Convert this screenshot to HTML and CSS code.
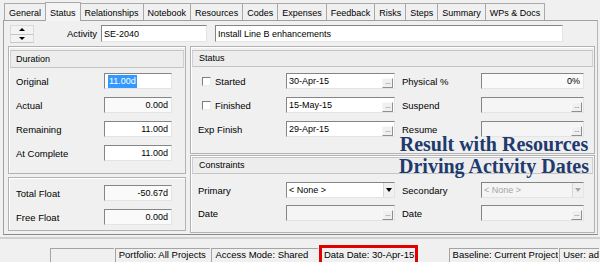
FILE: index.html
```html
<!DOCTYPE html>
<html>
<head>
<meta charset="utf-8">
<link rel="stylesheet" href="styles.css">
</head>
<body>
<div class="tabs">
  <div class="tab">General</div>
  <div class="tab sel">Status</div>
  <div class="tab">Relationships</div>
  <div class="tab">Notebook</div>
  <div class="tab">Resources</div>
  <div class="tab">Codes</div>
  <div class="tab">Expenses</div>
  <div class="tab">Feedback</div>
  <div class="tab">Risks</div>
  <div class="tab">Steps</div>
  <div class="tab">Summary</div>
  <div class="tab">WPs &amp; Docs</div>
</div>
<div class="page">
  <div class="actrow">
    <div class="spin">
      <div class="sbtn"><i class="up"></i></div>
      <div class="sbtn"><i class="dn"></i></div>
    </div>
    <span class="actlbl">Activity</span>
    <div class="fld f-id">SE-2040</div>
    <div class="fld f-desc">Install Line B enhancements</div>
  </div>
  <div class="main">
    <div class="lcol">
      <div class="grp g-dur">
        <div class="ghead">Duration</div>
        <div class="rows">
          <div class="row"><span class="lbl l-dur">Original</span><div class="fld f-dur"><span class="hl">11.00d</span></div></div>
          <div class="row"><span class="lbl l-dur">Actual</span><div class="fld f-dur ro num">0.00d</div></div>
          <div class="row"><span class="lbl l-dur">Remaining</span><div class="fld f-dur num">11.00d</div></div>
          <div class="row"><span class="lbl l-dur">At Complete</span><div class="fld f-dur num">11.00d</div></div>
        </div>
      </div>
      <div class="grp g-flt">
        <div class="rows">
          <div class="row"><span class="lbl l-dur">Total Float</span><div class="fld f-dur ro num">-50.67d</div></div>
          <div class="row"><span class="lbl l-dur">Free Float</span><div class="fld f-dur ro num">0.00d</div></div>
        </div>
      </div>
    </div>
    <div class="rcol">
      <div class="grp g-st">
        <div class="ghead">Status</div>
        <div class="rows">
          <div class="row">
            <span class="lbl l-a"><span class="chk"></span>Started</span>
            <div class="fld f-a"><span class="txt">30-Apr-15</span><span class="dots">...</span></div>
            <span class="lbl l-b">Physical %</span>
            <div class="fld f-b ro num">0%</div>
          </div>
          <div class="row">
            <span class="lbl l-a"><span class="chk"></span>Finished</span>
            <div class="fld f-a"><span class="txt">15-May-15</span><span class="dots">...</span></div>
            <span class="lbl l-b">Suspend</span>
            <div class="fld f-b dis"><span class="dots">...</span></div>
          </div>
          <div class="row">
            <span class="lbl l-a">Exp Finish</span>
            <div class="fld f-a"><span class="txt">29-Apr-15</span><span class="dots">...</span></div>
            <span class="lbl l-b">Resume</span>
            <div class="fld f-b dis"><span class="dots">...</span></div>
          </div>
        </div>
      </div>
      <div class="grp g-con">
        <div class="ghead">Constraints</div>
        <div class="rows">
          <div class="row">
            <span class="lbl l-a">Primary</span>
            <div class="fld f-a"><span class="txt">&lt; None &gt;</span><span class="arrow"><i></i></span></div>
            <span class="lbl l-b">Secondary</span>
            <div class="fld f-b dis grey"><span class="txt">&lt; None &gt;</span><span class="arrow off"><i></i></span></div>
          </div>
          <div class="row">
            <span class="lbl l-a">Date</span>
            <div class="fld f-a dis"><span class="dots">...</span></div>
            <span class="lbl l-b">Date</span>
            <div class="fld f-b dis"><span class="dots">...</span></div>
          </div>
        </div>
      </div>
    </div>
  </div>
</div>
<div class="sbar">
  <div class="cell c-empty"></div>
  <div class="cell c-port">Portfolio: All Projects</div>
  <div class="cell c-acc">Access Mode: Shared</div>
  <div class="cell c-date">Data Date: 30-Apr-15</div>
  <div class="cell c-base">Baseline: Current Project</div>
  <div class="cell c-user">User: admin</div>
</div>
<div class="overlay">Result with Resources<br>Driving Activity Dates</div>
</body>
</html>
```

FILE: styles.css
```css
html, body {
  margin: 0;
  padding: 0;
}
body {
  width: 600px;
  height: 262px;
  overflow: hidden;
  background: #f0f0f0;
  font-family: "Liberation Sans", Arial, sans-serif;
  font-size: 9px;
  color: #000;
  position: relative;
}

/* tabs */
.tabs {
  display: flex;
  align-items: flex-end;
  height: 20px;
  padding-left: 4px;
  box-sizing: border-box;
}
.tab {
  box-sizing: border-box;
  height: 17px;
  padding: 3px 4px 0;
  line-height: 13px;
  border: 1px solid #a9a9a9;
  border-bottom: 0;
  margin-right: -1px;
  background: #f0f0f0;
  white-space: nowrap;
}
.tab.sel {
  height: 19px;
  padding-top: 4px;
  margin-bottom: -1px;
  position: relative;
  z-index: 1;
  background: #f4f4f4;
}

/* page */
.page {
  box-sizing: border-box;
  margin-left: 3px;
  width: 595px;
  height: 215px;
  border: 1px solid #a0a0a0;
  border-right-color: #b8b8b8;
  border-bottom-color: #8a8a8a;
}
.actrow {
  display: flex;
  align-items: center;
  height: 25px;
  padding-left: 6px;
}
.spin {
  width: 24px;
  height: 18px;
  display: flex;
  flex-direction: column;
  margin-top: 1px;
}
.sbtn {
  flex: 1;
  display: flex;
  align-items: center;
  justify-content: center;
  border: 1px solid #dadada;
  border-bottom-color: #c6c6c6;
  background: #f3f3f3;
}
.sbtn + .sbtn {
  border-top: 0;
}
.up {
  width: 0;
  height: 0;
  border-left: 3px solid transparent;
  border-right: 3px solid transparent;
  border-bottom: 3px solid #000;
}
.dn {
  width: 0;
  height: 0;
  border-left: 3px solid transparent;
  border-right: 3px solid transparent;
  border-top: 3px solid #000;
}
.actlbl {
  margin-left: 33px;
  width: 31px;
  font-size: 9.5px;
}

/* fields */
.fld {
  box-sizing: border-box;
  height: 16px;
  border: 1px solid;
  border-color: #858585 #e4e4e4 #e4e4e4 #858585;
  background: #fff;
  display: flex;
  align-items: center;
  padding: 0 2px;
  line-height: 14px;
  white-space: nowrap;
  overflow: hidden;
}
.f-id {
  width: 106px;
  margin-left: 3px;
  height: 17px;
}
.f-desc {
  width: 348px;
  margin-left: 8px;
  height: 17px;
}
.num {
  justify-content: flex-end;
  padding-right: 3px;
}
.ro {
  background: #fafafa;
}
.dis {
  background: #f5f5f5;
}
.grey {
  color: #a6a6a6;
}
.hl {
  background: #3399ff;
  color: #fff;
  padding: 0 1px;
  margin-left: 1px;
  line-height: 13px;
}
.txt {
  flex: 1;
}
.dots {
  box-sizing: border-box;
  width: 11px;
  height: 10px;
  margin-left: auto;
  margin-right: -1px;
  align-self: flex-end;
  border: 1px solid;
  border-color: #f8f8f8 #8f8f8f #8f8f8f #f8f8f8;
  background: #f0f0f0;
  color: #6e6e6e;
  font-size: 8px;
  line-height: 6px;
  letter-spacing: -0.5px;
  text-align: center;
  overflow: hidden;
}
.arrow {
  box-sizing: border-box;
  width: 11px;
  height: 14px;
  margin-left: auto;
  margin-right: -2px;
  background: #f0f0f0;
  border-left: 1px solid #d6d6d6;
  display: flex;
  align-items: center;
  justify-content: center;
}
.arrow i {
  width: 0;
  height: 0;
  border-left: 3px solid transparent;
  border-right: 3px solid transparent;
  border-top: 4px solid #000;
}
.arrow.off i {
  border-top-color: #a8a8a8;
}

/* layout */
.main {
  display: flex;
  gap: 4px;
  padding-left: 4px;
}
.lcol {
  width: 178px;
  display: flex;
  flex-direction: column;
  gap: 3px;
}
.rcol {
  width: 405px;
  display: flex;
  flex-direction: column;
  gap: 1px;
}
.grp {
  box-sizing: border-box;
  border: 1px solid #b2b2b2;
  box-shadow: inset 1px 1px 0 #fff;
  padding: 3px 1px 0 1px;
}
.g-dur { height: 128px; }
.g-flt { height: 54px; padding-top: 0; }
.g-st { height: 108px; }
.g-con { height: 78px; padding-top: 1px; }

.ghead {
  box-sizing: border-box;
  height: 18px;
  border: 1px solid #d0d0d0;
  border-top-color: #c4c4c4;
  border-bottom-color: #c4c4c4;
  background: #ededed;
  padding-left: 5px;
  line-height: 16px;
}
.g-st .ghead,
.g-con .ghead {
  height: 17px;
  line-height: 15px;
  padding-left: 6px;
}
.rows {
  display: flex;
  flex-direction: column;
  gap: 8px;
  padding: 5px 0 0 6px;
}
.g-flt .rows { padding-top: 7px; }
.g-st .rows { padding-top: 6px; }
.g-con .rows { padding-top: 8px; gap: 7px; }
.row {
  display: flex;
  align-items: center;
  height: 16px;
}
.lbl {
  display: flex;
  align-items: center;
  white-space: nowrap;
  font-size: 9.5px;
}
.l-dur { width: 88px; }
.f-dur { width: 68px; }
.l-a { width: 88px; }
.f-a { width: 109px; }
.l-b { width: 79px; margin-left: 7px; }
.f-b { width: 103px; }
.chk {
  box-sizing: border-box;
  width: 9px;
  height: 9px;
  margin: 0 4px 0 4px;
  border: 1px solid;
  border-color: #7c7c7c #ececec #ececec #7c7c7c;
  background: #fff;
}

/* status bar */
.sbar {
  box-sizing: border-box;
  margin-top: 2px;
  height: 25px;
  border-top: 2px solid #d0d0d0;
  padding: 9px 0 0 50px;
  display: flex;
  align-items: flex-start;
}
.cell {
  box-sizing: border-box;
  height: 16px;
  border-top: 1px solid #a4a4a4;
  border-left: 1px solid #a4a4a4;
  padding-left: 3px;
  line-height: 12px;
  margin-right: 1px;
  white-space: nowrap;
  overflow: hidden;
  font-size: 9.5px;
}
.c-empty { width: 64px; }
.c-port { width: 96px; }
.c-acc { width: 107px; }
.c-date {
  width: 99px;
  height: 20px;
  margin-top: -3px;
  border: 3px solid #e30000;
  padding-left: 2px;
  line-height: 14px;
}
.c-base { width: 110px; margin-left: 30px; }
.c-user { width: 40px; }

/* annotation overlay */
.overlay {
  position: absolute;
  left: 393px;
  top: 133px;
  width: 202px;
  text-align: center;
  font-family: "Liberation Serif", "Times New Roman", serif;
  font-weight: bold;
  font-size: 20px;
  line-height: 22px;
  color: #203a6e;
  white-space: nowrap;
}
```
